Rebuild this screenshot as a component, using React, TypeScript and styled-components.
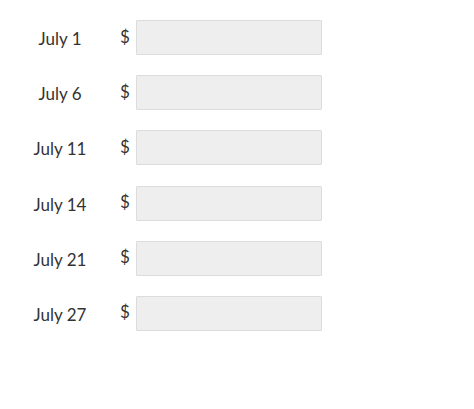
import React from "react";
import styled, { createGlobalStyle } from "styled-components";

const Global = createGlobalStyle`
  html, body { margin: 0; padding: 0; background: #ffffff; }
  body { font-family: Lato, "Open Sans", sans-serif; color: #333333; }
`;

const List = styled.div`
  display: flex;
  flex-direction: column;
  gap: 20.2px;
  padding-top: 20px;
`;

const Row = styled.div`
  display: flex;
  align-items: center;
  height: 35px;
`;

const Label = styled.div`
  width: 120px;
  text-align: center;
  font-size: 17px;
  line-height: 20px;
  padding-top: 3px;
`;

const Dollar = styled.span`
  width: 16px;
  font-size: 17px;
  line-height: 20px;
  padding-bottom: 2px;
`;

const Field = styled.input`
  box-sizing: border-box;
  width: 186px;
  height: 35px;
  margin: 0;
  border: 1px solid #dcdcdc;
  border-radius: 1px;
  background: #eeeeee;
  outline: none;
`;

const dates = ["July 1", "July 6", "July 11", "July 14", "July 21", "July 27"];

export default function App() {
  return (
    <>
      <Global />
      <List>
        {dates.map((d) => (
          <Row key={d}>
            <Label>{d}</Label>
            <Dollar>$</Dollar>
            <Field type="text" />
          </Row>
        ))}
      </List>
    </>
  );
}
